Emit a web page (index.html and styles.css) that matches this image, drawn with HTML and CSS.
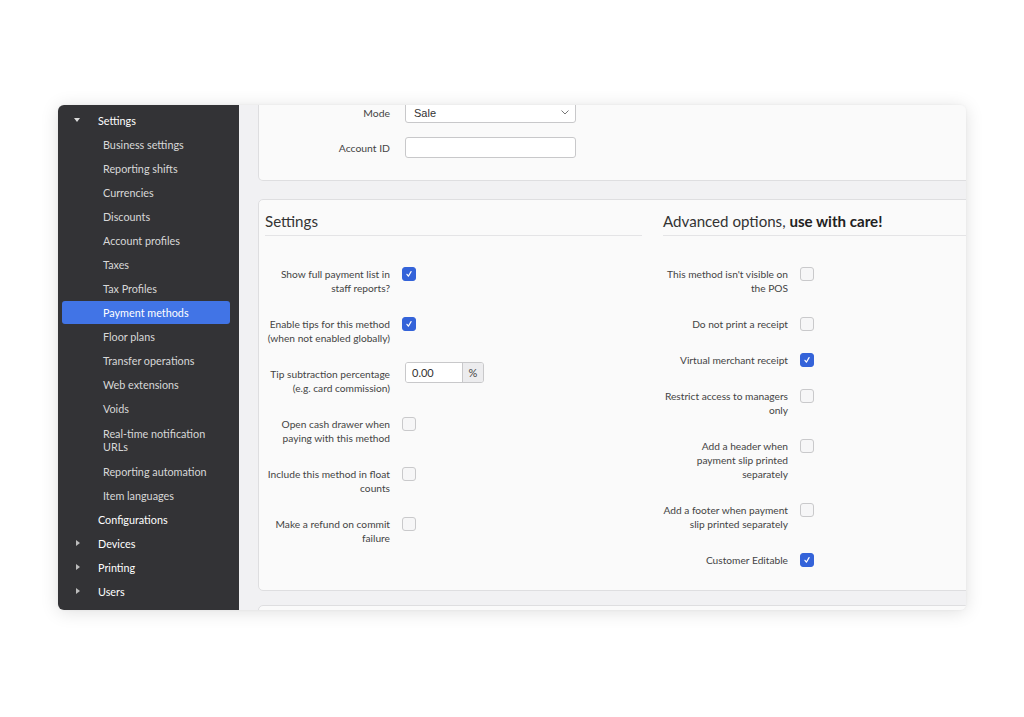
FILE: index.html
```html
<!DOCTYPE html>
<html lang="en">
<head>
<meta charset="utf-8">
<title>Payment methods</title>
<link rel="stylesheet" href="styles.css">
</head>
<body>
<div class="stage">
  <div class="window">
    <nav class="sidebar">
      <div class="nav-item top"><span class="caret down"></span>Settings</div>
      <div class="nav-item sub">Business settings</div>
      <div class="nav-item sub">Reporting shifts</div>
      <div class="nav-item sub">Currencies</div>
      <div class="nav-item sub">Discounts</div>
      <div class="nav-item sub">Account profiles</div>
      <div class="nav-item sub">Taxes</div>
      <div class="nav-item sub">Tax Profiles</div>
      <div class="nav-item sub active">Payment methods</div>
      <div class="nav-item sub">Floor plans</div>
      <div class="nav-item sub">Transfer operations</div>
      <div class="nav-item sub">Web extensions</div>
      <div class="nav-item sub">Voids</div>
      <div class="nav-item sub multi">Real-time notification URLs</div>
      <div class="nav-item sub">Reporting automation</div>
      <div class="nav-item sub">Item languages</div>
      <div class="nav-item top"><span class="caret"></span>Configurations</div>
      <div class="nav-item top"><span class="caret right"></span>Devices</div>
      <div class="nav-item top"><span class="caret right"></span>Printing</div>
      <div class="nav-item top"><span class="caret right"></span>Users</div>
    </nav>

    <main class="main">
      <section class="card card-form">
        <div class="form-row">
          <label class="form-label">Mode</label>
          <div class="select">
            <span>Sale</span>
            <svg class="chev" width="8" height="5" viewBox="0 0 8 5"><polyline points="0.5,0.5 4,4 7.5,0.5" fill="none" stroke="#777" stroke-width="1"/></svg>
          </div>
        </div>
        <div class="form-row">
          <label class="form-label">Account ID</label>
          <div class="text-input"></div>
        </div>
      </section>

      <section class="card card-settings">
        <div class="col">
          <h2 class="col-title">Settings</h2>
          <div class="rows">
            <div class="row"><div class="lbl">Show full payment list in staff reports?</div><span class="check on"><svg viewBox="0 0 14 14"><path d="M4.6 7.4 L6.3 9.6 L9.4 4.2"/></svg></span></div>
            <div class="row"><div class="lbl">Enable tips for this method (when not enabled globally)</div><span class="check on"><svg viewBox="0 0 14 14"><path d="M4.6 7.4 L6.3 9.6 L9.4 4.2"/></svg></span></div>
            <div class="row"><div class="lbl">Tip subtraction percentage (e.g. card commission)</div>
              <div class="input-group"><span class="num">0.00</span><span class="addon">%</span></div>
            </div>
            <div class="row"><div class="lbl">Open cash drawer when paying with this method</div><span class="check"></span></div>
            <div class="row"><div class="lbl">Include this method in float counts</div><span class="check"></span></div>
            <div class="row"><div class="lbl">Make a refund on commit failure</div><span class="check"></span></div>
          </div>
        </div>
        <div class="col">
          <h2 class="col-title">Advanced options, <b>use with care!</b></h2>
          <div class="rows">
            <div class="row"><div class="lbl">This method isn't visible on the POS</div><span class="check"></span></div>
            <div class="row"><div class="lbl">Do not print a receipt</div><span class="check"></span></div>
            <div class="row"><div class="lbl">Virtual merchant receipt</div><span class="check on"><svg viewBox="0 0 14 14"><path d="M4.6 7.4 L6.3 9.6 L9.4 4.2"/></svg></span></div>
            <div class="row"><div class="lbl">Restrict access to managers only</div><span class="check"></span></div>
            <div class="row"><div class="lbl">Add a header when payment slip printed separately</div><span class="check"></span></div>
            <div class="row"><div class="lbl">Add a footer when payment slip printed separately</div><span class="check"></span></div>
            <div class="row"><div class="lbl">Customer Editable</div><span class="check on"><svg viewBox="0 0 14 14"><path d="M4.6 7.4 L6.3 9.6 L9.4 4.2"/></svg></span></div>
          </div>
        </div>
      </section>

      <section class="card card-next"></section>
    </main>
  </div>
</div>
</body>
</html>
```

FILE: styles.css
```css
* { box-sizing: border-box; }

html, body {
  margin: 0;
  background: #ffffff;
  font-family: Lato, "Open Sans", sans-serif;
}

.stage {
  width: 1024px;
  height: 717px;
  padding: 105px 0 0 58px;
}

.window {
  width: 908px;
  height: 505px;
  display: flex;
  border-radius: 6px;
  overflow: hidden;
  box-shadow: 0 2px 18px rgba(0, 0, 0, 0.13), 0 0 3px rgba(0, 0, 0, 0.05);
}

/* ---- sidebar ---- */
.sidebar {
  width: 181px;
  flex-shrink: 0;
  background: #333336;
  padding: 3px 9px 0 4px;
}

.nav-item {
  display: flex;
  align-items: center;
  height: 24px;
  font-size: 10.8px;
  line-height: 13px;
  border-radius: 3px;
}

.nav-item.top {
  color: #ffffff;
  padding-left: 0;
}

.nav-item.sub {
  color: #d8d8d8;
  padding-left: 41px;
  padding-right: 6px;
}

.nav-item.multi {
  height: auto;
  padding-top: 6.5px;
  padding-bottom: 6.5px;
  max-width: 160px;
}

.nav-item.active {
  background: #4174e6;
  color: #ffffff;
  height: 23px;
  margin-top: 1px;
}

.caret {
  width: 36px;
  height: 24px;
  flex-shrink: 0;
  position: relative;
}

.caret.down::before {
  content: "";
  position: absolute;
  left: 12px;
  top: 10px;
  border-left: 3.5px solid transparent;
  border-right: 3.5px solid transparent;
  border-top: 4px solid #dcdcdc;
}

.caret.right::before {
  content: "";
  position: absolute;
  left: 14px;
  top: 8.5px;
  border-top: 3.5px solid transparent;
  border-bottom: 3.5px solid transparent;
  border-left: 4px solid #bdbdbd;
}

/* ---- main area ---- */
.main {
  flex: 1;
  background: #f1f1f3;
  padding-left: 19px;
  overflow: hidden;
}

.card {
  width: 789px;
  background: #fafafa;
  border: 1px solid #dedee0;
  border-radius: 5px;
}

.card-form {
  margin-top: -4px;
  border-top: 0;
  border-top-left-radius: 0;
  border-top-right-radius: 0;
  padding: 1px 0 22px 7px;
}

.form-row {
  display: grid;
  grid-template-columns: 124px 171px;
  column-gap: 15px;
  align-items: center;
  margin-bottom: 14px;
}

.form-row:last-child { margin-bottom: 0; }

.form-label {
  text-align: right;
  font-size: 10.4px;
  color: #444;
}

.select, .text-input {
  height: 21px;
  background: #ffffff;
  border: 1px solid #c8c8ca;
  border-radius: 3px;
}

.select {
  display: flex;
  align-items: center;
  justify-content: space-between;
  padding: 0 6px 0 8px;
  font-family: "Liberation Sans", Arial, sans-serif;
  font-size: 11px;
  color: #333;
}

.card-settings {
  margin-top: 18px;
  display: flex;
  column-gap: 21px;
  padding: 11px 0 23px 6px;
}

.col {
  width: 377px;
  flex-shrink: 0;
}

.col-title {
  margin: 0;
  font-size: 15.1px;
  line-height: 20px;
  font-weight: 400;
  color: #333;
  padding-bottom: 4px;
  border-bottom: 1px solid #e4e4e6;
}

.col-title b { font-weight: 700; color: #222; }

.rows {
  padding-top: 31px;
}

.row {
  display: grid;
  grid-template-columns: 125px auto;
  column-gap: 12px;
  justify-content: start;
  align-items: start;
  margin-bottom: 22px;
}

.row:last-child { margin-bottom: 0; }

.lbl {
  text-align: right;
  font-size: 10.2px;
  line-height: 14px;
  color: #444;
}

.check {
  width: 14px;
  height: 14px;
  border: 1px solid #c9c9cb;
  border-radius: 3px;
  background: #f6f6f7;
  display: block;
}

.check.on {
  background: #3463d9;
  border-color: #3463d9;
}

.check svg {
  display: block;
  width: 12px;
  height: 12px;
}

.check svg path {
  fill: none;
  stroke: #ffffff;
  stroke-width: 1.4;
  stroke-linecap: round;
  stroke-linejoin: round;
}

.input-group {
  display: flex;
  height: 21px;
  margin-left: 3px;
  margin-top: -5px;
  border: 1px solid #c8c8ca;
  border-radius: 3px;
  overflow: hidden;
  font-size: 11px;
  color: #333;
}

.num {
  width: 57px;
  background: #ffffff;
  padding: 0 6px;
  display: flex;
  align-items: center;
  border-right: 1px solid #c8c8ca;
}

.addon {
  width: 20px;
  background: #ececee;
  display: flex;
  align-items: center;
  justify-content: center;
  color: #444;
}

.card-next {
  margin-top: 14px;
  height: 40px;
}
```
